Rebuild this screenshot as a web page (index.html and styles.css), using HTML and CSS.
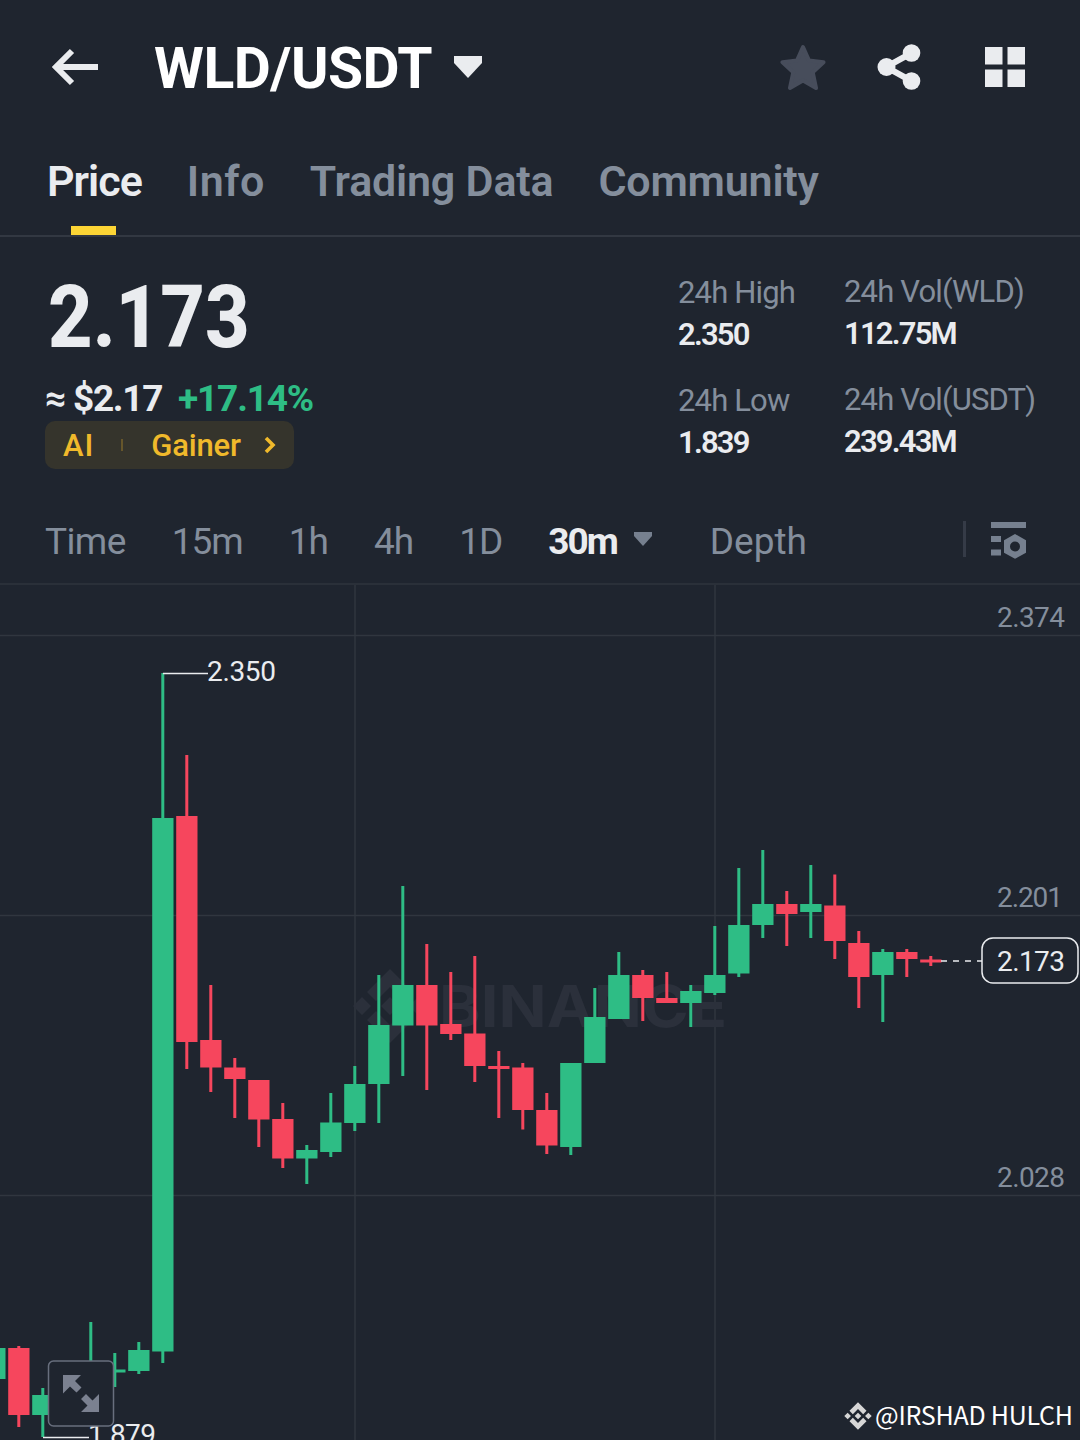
FILE: index.html
```html
<!DOCTYPE html>
<html lang="en">
<head>
    <meta charset="UTF-8">
    <meta name="viewport" content="width=device-width, initial-scale=1.0">
    <title>WLD/USDT</title>
    <link rel="stylesheet" href="styles.css">
</head>
<body>
    <header>
        <svg class="back" width="46" height="38" viewBox="0 0 46 38">
            <path d="M20 3L4 19l16 16M4 19h42" fill="none" stroke="#eaecef" stroke-width="6"/>
        </svg>
        <h1>WLD/USDT</h1>
        <svg class="pair-arrow" width="28" height="22" viewBox="0 0 28 22">
            <path d="M0 0h28v7L14 22 0 7z" fill="#eaecef"/>
        </svg>
        <div class="actions">
            <svg width="46" height="48" viewBox="0 0 46 48">
                <path d="M23 3l6 13.500 14.500 1.700-10.800 10L36 44l-13-7.500L10 44l3.300-15.800-10.800-10L17 16.500z" fill="#474d5b" stroke="#474d5b" stroke-width="4" stroke-linejoin="round"/>
            </svg>
            <svg width="44" height="46" viewBox="0 0 44 46">
                <path d="M34.500 9L9 23l25.500 14" fill="none" stroke="#eaecef" stroke-width="6"/>
                <g fill="#eaecef">
                    <circle cx="34.500" cy="9" r="8.800"/>
                    <circle cx="9.500" cy="23" r="9"/>
                    <circle cx="34.500" cy="37" r="8.800"/>
                </g>
            </svg>
            <svg width="40" height="40" viewBox="0 0 40 40">
                <path d="M0 0h17.500v17.500H0zM22.500 0H40v17.500H22.500zM0 22.500h17.500V40H0zM22.500 22.500H40V40H22.500z" fill="#eaecef"/>
            </svg>
        </div>
    </header>

    <nav class="tabs">
        <a class="tab active">Price</a>
        <a class="tab t-info">Info</a>
        <a class="tab">Trading Data</a>
        <a class="tab">Community</a>
    </nav>

    <section class="summary">
        <div class="price-block">
            <div class="price">2.173</div>
            <div class="change">
                <span class="fiat">≈ $2.17</span>
                <span class="percent">+17.14%</span>
            </div>
            <div class="tags">
                <span>AI</span>
                <i></i>
                <span class="gainer">Gainer</span>
                <svg width="12" height="18" viewBox="0 0 12 18">
                    <path d="M2 2l7 7-7 7" fill="none" stroke="#f0b92b" stroke-width="3.600"/>
                </svg>
            </div>
        </div>
        <div class="stats">
            <div class="stat">
                <div class="label">24h High</div>
                <div class="value">2.350</div>
            </div>
            <div class="stat">
                <div class="label">24h Vol(WLD)</div>
                <div class="value">112.75M</div>
            </div>
            <div class="stat">
                <div class="label">24h Low</div>
                <div class="value">1.839</div>
            </div>
            <div class="stat">
                <div class="label">24h Vol(USDT)</div>
                <div class="value">239.43M</div>
            </div>
        </div>
    </section>

    <div class="intervals">
        <span class="i-time">Time</span>
        <span class="i-15m">15m</span>
        <span class="i-1h">1h</span>
        <span class="i-4h">4h</span>
        <span class="i-1d">1D</span>
        <span class="i-30m">30m</span>
        <svg class="interval-arrow" width="18" height="14" viewBox="0 0 18 14">
            <path d="M0 0h18v4l-9 10L0 4z" fill="#76808f"/>
        </svg>
        <span class="i-depth">Depth</span>
        <svg class="settings" width="63" height="38" viewBox="0 0 63 38">
            <path d="M1.500 0v36" stroke="#353b47" stroke-width="3"/>
            <path d="M28 1h35v6H28zM28 15h10v6H28zM28 28.500h10v6H28z" fill="#76808f"/>
            <path d="M52 13l11 6.200v12.600l-11 6-11-6V19.200zM52 20.500a5 5 0 1 0 0 10 5 5 0 0 0 0-10z" fill="#76808f" fill-rule="evenodd"/>
        </svg>
    </div>

    <main class="chart">
        <svg width="1080" height="855" viewBox="0 585 1080 855">
            <!-- grid -->
            <path d="M0 635.500h1080M0 915.500h1080M0 1195.500h1080M355 585v855M715 585v855" stroke="#30363f" stroke-width="1.500"/>

            <!-- watermark -->
            <g class="watermark">
                <g transform="translate(390 1006)">
                    <path d="M0-37l23 23-9 9-14-14-14 14-9-9zM0 37l23-23-9-9L0 19-14 5l-9 9zM-28-9l9 9-9 9-9-9zM28-9l9 9-9 9-9-9zM0-9l9 9-9 9-9-9z"/>
                </g>
                <text x="439" y="1027" textLength="288" lengthAdjust="spacingAndGlyphs">BINANCE</text>
            </g>

            <g id="candles"></g>

            <path d="M163 673.500h45M43 1437.500h46" stroke="#eaecef" stroke-width="1.500"/>
            <path d="M941 961h41" stroke="#eaecef" stroke-width="1.500" stroke-dasharray="6 6"/>

            <g class="extreme">
                <text x="207" y="681" textLength="69">2.350</text>
                <text x="88" y="1444" textLength="68">1.879</text>
            </g>

            <g class="axis">
                <text x="997" y="627" textLength="68">2.374</text>
                <text x="997" y="907" textLength="66">2.201</text>
                <text x="997" y="1187" textLength="68">2.028</text>
            </g>

            <rect x="982" y="938" width="96" height="45" rx="11" fill="#1f252f" stroke="#eaecef" stroke-width="1.500"/>
            <text class="last" x="997" y="971" textLength="68">2.173</text>

            <!-- fullscreen button -->
            <rect x="48.500" y="1361" width="65" height="65" rx="5" fill="#1f252f" stroke="#686f7e" stroke-width="1.500"/>
            <path d="M63 1375h18l-6 6 6.500 6.500-5 5L70 1386.500l-7 7zM99 1412H81l6.500-6.500-6.500-6.500 5-5 6.500 6.500 6.500-6.500z" fill="#7b8190"/>

            <g class="credit">
                <g transform="translate(858 1416) scale(.370)">
                    <path d="M0-37l23 23-9 9-14-14-14 14-9-9zM0 37l23-23-9-9L0 19-14 5l-9 9zM-28-9l9 9-9 9-9-9zM28-9l9 9-9 9-9-9zM0-9l9 9-9 9-9-9z" fill="#d6d6d6"/>
                </g>
                <text x="875" y="1425" textLength="198">@IRSHAD HULCH</text>
            </g>
        </svg>
    </main>

    <script>
        // high, body top, body bottom, low, color
        const candles = [
            [1348, 1348, 1379, 1379, "g"],
            [1346, 1348, 1415, 1427, "r"],
            [1388, 1395, 1415, 1437, "g"],
            [1380, 1385, 1395, 1400, "r"],
            [1322, 1370, 1390, 1395, "g"],
            [1353, 1369.5, 1372.5, 1387, "g"],
            [1342, 1350, 1371, 1374, "g"],
            [673, 818, 1351.5, 1363, "g"],
            [755, 816, 1042, 1069, "r"],
            [985, 1040, 1067.5, 1092, "r"],
            [1058, 1067.5, 1079, 1118, "r"],
            [1080, 1080, 1119.5, 1147, "r"],
            [1103, 1119, 1158.5, 1168, "r"],
            [1145, 1150, 1158.5, 1184, "g"],
            [1093, 1122.5, 1152, 1157, "g"],
            [1066, 1084, 1123, 1131, "g"],
            [975, 1025, 1084, 1123, "g"],
            [886, 985, 1025.5, 1076, "g"],
            [944, 985, 1025.5, 1090, "r"],
            [972, 1024, 1034, 1040, "r"],
            [956, 1033.5, 1066, 1082, "r"],
            [1051, 1066, 1069, 1118, "r"],
            [1063, 1067.5, 1110, 1129.5, "r"],
            [1093, 1110, 1145.5, 1154, "r"],
            [1063, 1063, 1147, 1155, "g"],
            [988, 1017, 1063, 1063, "g"],
            [952, 975, 1019, 1019, "g"],
            [970, 975, 998, 1021, "r"],
            [972, 998, 1003, 1003, "r"],
            [985, 991, 1003, 1027, "g"],
            [926, 975, 993, 995, "g"],
            [868, 925, 973.5, 977, "g"],
            [850, 904, 925, 938, "g"],
            [891, 904, 914, 946, "r"],
            [865, 904, 912, 938, "g"],
            [874.5, 905.5, 941, 959, "r"],
            [931, 943, 977, 1008, "r"],
            [949, 952, 975, 1022, "g"],
            [949, 952, 959, 977, "r"],
            [956, 959.5, 962.5, 966, "r"]
        ];

        let out = "";
        candles.forEach(([high, top, bottom, low, color], i) => {
            const x = -5 + i * 24;
            out += `<g class="${color}">
                <rect x="${x - 1.7}" y="${high}" width="3" height="${low - high}"/>
                <rect x="${x - 10.8}" y="${top}" width="21.3" height="${bottom - top}"/>
            </g>`;
        });
        document.getElementById("candles").innerHTML = out;
    </script>
</body>
</html>
```
FILE: styles.css
```css
* {
    box-sizing: border-box;
}

body {
    margin: 0;
    width: 1080px;
    height: 1440px;
    overflow: hidden;
    background-color: #1f252f;
    color: #eaecef;
    font-family: Roboto, "Noto Sans", sans-serif;
}

svg {
    display: block;
    flex-shrink: 0;
}

/* Top bar */
header {
    display: flex;
    align-items: center;
    height: 134px;
    margin-bottom: 2px;
    padding: 0 55px 0 52px;
}

header h1 {
    margin: 3px 0 0 56px;
    color: #fff;
    font-size: 57px;
    font-weight: 700;
    letter-spacing: -0.5px;
    line-height: 66px;
}

.pair-arrow {
    margin-left: 22px;
}

.actions {
    display: flex;
    align-items: center;
    margin-left: auto;
}

.actions svg:nth-child(1) {
    margin-top: 2px;
}

.actions svg:nth-child(2) {
    margin-left: 51px;
}

.actions svg:nth-child(3) {
    margin-left: 64px;
}

/* Page tabs */
.tabs {
    display: flex;
    height: 101px;
    padding: 0 47px;
    gap: 45px;
    border-bottom: 2px solid #323842;
}

.tab {
    position: relative;
    padding-top: 20px;
    color: #848e9c;
    font-size: 43px;
    font-weight: 600;
    letter-spacing: -0.2px;
    line-height: 50px;
}

.tab.active {
    color: #eaecef;
    letter-spacing: -1px;
}

.tab.t-info {
    letter-spacing: 0.5px;
}

.tab.active::after {
    content: "";
    position: absolute;
    left: 24px;
    bottom: 0;
    width: 45px;
    height: 9px;
    background-color: #fcd535;
}

/* Price summary */
.summary {
    display: flex;
    justify-content: space-between;
    height: 263px;
    padding: 32px 40px 0 45px;
}

.price {
    height: 100px;
    margin-left: 3px;
    font-size: 88px;
    font-weight: 800;
    line-height: 96px;
    transform: scaleX(.88);
    transform-origin: left;
}

.change {
    display: flex;
    height: 52px;
    gap: 16px;
    font-size: 37px;
    font-weight: 700;
    line-height: 60px;
}

.fiat {
    letter-spacing: -1.3px;
}

.percent {
    color: #2ebd85;
    letter-spacing: -1.2px;
}

.tags {
    display: flex;
    align-items: center;
    width: 249px;
    height: 48px;
    padding: 0 18px;
    border-radius: 10px;
    background-color: #35342c;
    color: #f0b92b;
    font-size: 31px;
    font-weight: 500;
    letter-spacing: 1px;
}

.tags .gainer {
    letter-spacing: -0.2px;
}

.tags i {
    width: 2px;
    height: 12px;
    margin: 0 28px 0 27px;
    background-color: #66562b;
}

.tags svg {
    margin-left: auto;
}

.stats {
    display: grid;
    grid-template-columns: 166px 196px;
    grid-auto-rows: 108px;
    padding-top: 3px;
}

.stat {
    font-size: 31px;
    line-height: 42px;
    white-space: nowrap;
}

.stat:nth-child(even) {
    margin-top: -1px;
}

.label {
    color: #848e9c;
    letter-spacing: -0.85px;
}

.value {
    font-weight: 600;
    letter-spacing: -1.8px;
}

/* Chart intervals */
.intervals {
    display: flex;
    align-items: center;
    height: 85px;
    padding: 0 54px 0 45px;
    border-bottom: 2px solid #2a3039;
    color: #848e9c;
    font-size: 37px;
    letter-spacing: -1px;
}

.intervals .i-time {
    letter-spacing: -0.6px;
}

.intervals .i-30m {
    color: #eaecef;
    font-weight: 700;
    letter-spacing: -2px;
}

.i-15m,
.i-1h,
.i-4h,
.i-1d,
.i-30m {
    margin-left: 46px;
}

.interval-arrow {
    margin: -6px 0 0 17px;
}

.intervals .i-depth {
    margin-left: 58px;
    letter-spacing: 0;
}

.settings {
    margin: -4px 0 0 auto;
}

/* Candlestick chart */
.chart {
    height: 855px;
}

.chart text {
    font-size: 28px;
}

.g {
    fill: #2ebd85;
}

.r {
    fill: #f6465d;
}

.chart .watermark {
    fill: #2b303b;
}

.chart .watermark text {
    font-family: Inter, sans-serif;
    font-size: 58px;
    font-weight: 700;
}

.axis {
    fill: #848e9c;
}

.extreme,
.last {
    fill: #eaecef;
}

.chart .credit text {
    fill: #fff;
    font-family: "Noto Sans CJK SC", "Noto Sans", sans-serif;
    font-size: 25px;
    font-weight: 400;
}
```
